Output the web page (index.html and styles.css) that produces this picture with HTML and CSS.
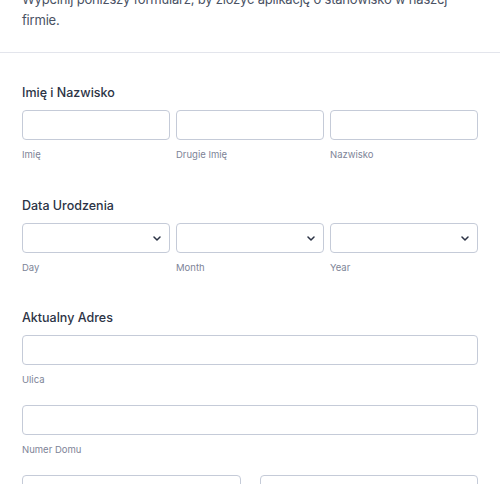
FILE: index.html
```html
<!DOCTYPE html>
<html>
  <head>
    <title>Formularz aplikacyjny</title>
    <meta charset="utf-8">
    <meta name="viewport" content="width=device-width, initial-scale=1">
    <link rel="stylesheet" href="styles.css">
  </head>

  <body>
    <div class="form">

      <div class="form-header">
        <p class="form-desc">Wypełnij poniższy formularz, by złożyć aplikację o stanowisko w naszej firmie.</p>
      </div>

      <ul class="form-fields">

        <li class="field">
          <label class="field-label">Imię i Nazwisko</label>
          <div class="row row-3">
            <div class="sub">
              <input class="input" type="text" id="first">
              <label class="sublabel" for="first">Imię</label>
            </div>
            <div class="sub">
              <input class="input" type="text" id="middle">
              <label class="sublabel" for="middle">Drugie Imię</label>
            </div>
            <div class="sub">
              <input class="input" type="text" id="last">
              <label class="sublabel" for="last">Nazwisko</label>
            </div>
          </div>
        </li>

        <li class="field field-date">
          <label class="field-label">Data Urodzenia</label>
          <div class="row row-3">
            <div class="sub">
              <div class="select-wrap">
                <select class="input select" id="day"><option></option></select>
                <svg class="chevron" width="8" height="5" viewBox="0 0 8 5"><path d="M1 1l3 3 3-3" /></svg>
              </div>
              <label class="sublabel" for="day">Day</label>
            </div>
            <div class="sub">
              <div class="select-wrap">
                <select class="input select" id="month"><option></option></select>
                <svg class="chevron" width="8" height="5" viewBox="0 0 8 5"><path d="M1 1l3 3 3-3" /></svg>
              </div>
              <label class="sublabel" for="month">Month</label>
            </div>
            <div class="sub">
              <div class="select-wrap">
                <select class="input select" id="year"><option></option></select>
                <svg class="chevron" width="8" height="5" viewBox="0 0 8 5"><path d="M1 1l3 3 3-3" /></svg>
              </div>
              <label class="sublabel" for="year">Year</label>
            </div>
          </div>
        </li>

        <li class="field">
          <label class="field-label">Aktualny Adres</label>
          <div class="stack">
            <div class="sub">
              <input class="input" type="text" id="street">
              <label class="sublabel" for="street">Ulica</label>
            </div>
            <div class="sub">
              <input class="input" type="text" id="house">
              <label class="sublabel" for="house">Numer Domu</label>
            </div>
            <div class="row row-2">
              <div class="sub">
                <input class="input" type="text" id="city">
                <label class="sublabel" for="city">Miasto</label>
              </div>
              <div class="sub">
                <input class="input" type="text" id="zip">
                <label class="sublabel" for="zip">Kod Pocztowy</label>
              </div>
            </div>
          </div>
        </li>

      </ul>
    </div>
  </body>
</html>
```

FILE: styles.css
```css
html, body {
  margin: 0;
  background: #fff;
}

* {
  box-sizing: border-box;
  font-family: Inter, "Noto Sans", sans-serif;
}

.form {
  width: 100%;
  overflow: hidden;
}

/* page is scrolled a little, so the first line sits under the top edge */
.form-header {
  margin-top: -11px;
  padding: 0 22px 21px;
  border-bottom: 1px solid #e3e5ec;
}

.form-desc {
  margin: 0;
  color: #4a5264;
  font-size: 13px;
  letter-spacing: -0.2px;
  line-height: 21px;
}

.form-fields {
  list-style: none;
  margin: 0;
  padding: 0 22px;
}

.field {
  padding: 31px 0 3px;
}

.field-date {
  padding-bottom: 2px;
}

.field-label {
  display: block;
  margin-bottom: 9px;
  color: #2c3345;
  font-size: 12.5px;
  font-weight: 500;
  line-height: 17px;
}

.row {
  display: grid;
  column-gap: 6px;
}

.row-3 {
  grid-template-columns: 1fr 1fr 1fr;
}

.row-2 {
  grid-template-columns: 1fr 1fr;
  column-gap: 19px;
}

.stack {
  display: grid;
  row-gap: 17px;
}

.sub {
  display: flex;
  flex-direction: column;
}

.input {
  display: block;
  width: 100%;
  height: 30px;
  margin: 0;
  padding: 0 10px;
  border: 1px solid #c5cbd8;
  border-radius: 4px;
  background: #fff;
  font-size: 13px;
  color: #2c3345;
}

.select-wrap {
  position: relative;
}

.select {
  appearance: none;
  -webkit-appearance: none;
}

.chevron {
  position: absolute;
  right: 9px;
  top: 13px;
  fill: none;
  stroke: #2c3345;
  stroke-width: 1.5;
  stroke-linecap: round;
  stroke-linejoin: round;
}

.sublabel {
  display: block;
  margin-top: 7px;
  color: #7d8497;
  font-size: 9.5px;
  line-height: 16px;
}
```
